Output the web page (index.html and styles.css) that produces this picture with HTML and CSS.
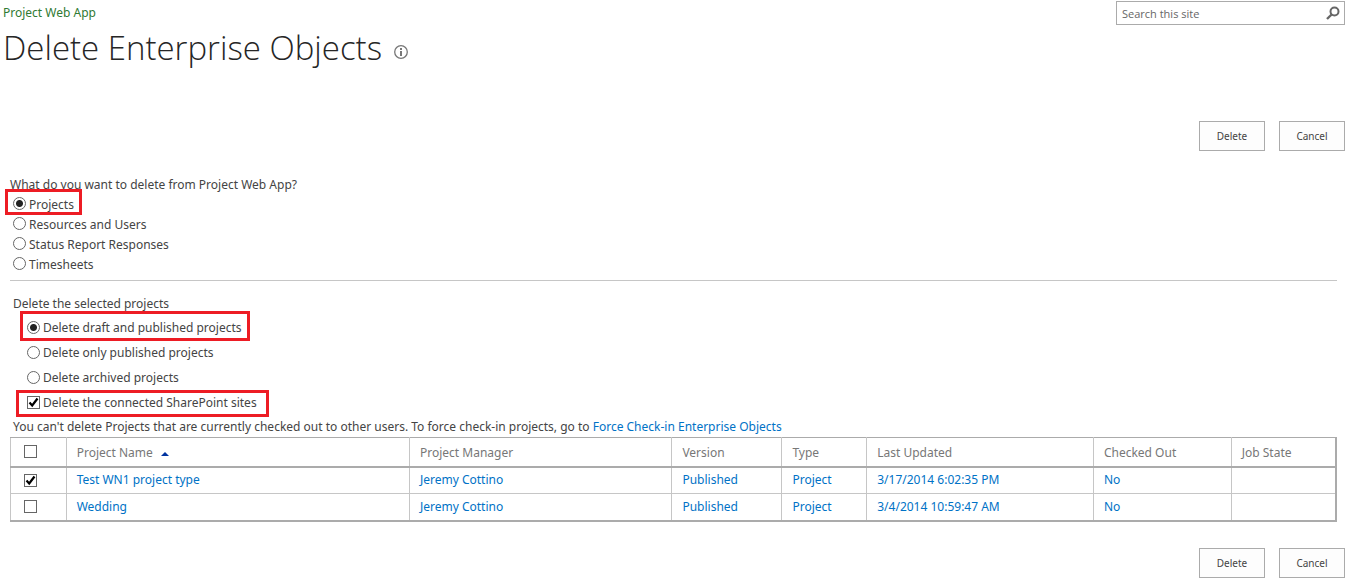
FILE: index.html
```html
<!DOCTYPE html>
<html lang="en">
<head>
    <meta charset="UTF-8">
    <meta name="viewport" content="width=device-width, initial-scale=1.0">
    <title>Delete Enterprise Objects</title>
    <link rel="stylesheet" href="styles.css">
</head>
<body>
    <header class="header">
        <div class="titles">
            <a class="site-link" href="#">Project Web App</a>
            <h1>Delete Enterprise Objects
                <svg class="info-icon" width="14" height="14" viewBox="0 0 14 14">
                    <circle cx="7" cy="7" r="6.3" fill="none" stroke="#777" stroke-width="1.3"/>
                    <path d="M6 3h2v2H6zM6 6h2v5H6z" fill="#777"/>
                </svg>
            </h1>
        </div>
        <form class="search">
            <input type="text" placeholder="Search this site" aria-label="Search this site">
            <button type="button" class="search-button" aria-label="Search">
                <svg width="14" height="14" viewBox="0 0 14 14">
                    <circle cx="8.5" cy="5.5" r="4" fill="none" stroke="#666" stroke-width="2"/>
                    <path d="M5.6 8.5L1 13" fill="none" stroke="#666" stroke-width="2.4"/>
                </svg>
            </button>
        </form>
    </header>

    <div class="buttons">
        <button type="button" class="btn">Delete</button>
        <button type="button" class="btn">Cancel</button>
    </div>

    <main class="content">
        <fieldset class="objects">
            <legend>What do you want to delete from Project Web App?</legend>
            <label class="marked"><input type="radio" name="object" checked>Projects</label>
            <label><input type="radio" name="object">Resources and Users</label>
            <label><input type="radio" name="object">Status Report Responses</label>
            <label><input type="radio" name="object">Timesheets</label>
        </fieldset>

        <fieldset class="options">
            <legend>Delete the selected projects</legend>
            <label class="marked"><input type="radio" name="scope" checked>Delete draft and published projects</label>
            <label><input type="radio" name="scope">Delete only published projects</label>
            <label><input type="radio" name="scope">Delete archived projects</label>
            <label class="marked marked-wide"><input type="checkbox" checked>Delete the connected SharePoint sites</label>
        </fieldset>

        <p class="note">You can't delete Projects that are currently checked out to other users. To force check-in projects, go to <a href="#">Force Check-in Enterprise Objects</a></p>

        <table class="grid">
            <colgroup>
                <col class="col-check">
                <col class="col-name">
                <col class="col-manager">
                <col class="col-version">
                <col class="col-type">
                <col class="col-updated">
                <col class="col-checked">
                <col class="col-job">
            </colgroup>
            <thead>
                <tr>
                    <th class="check"><input type="checkbox" aria-label="Select all projects"></th>
                    <th>Project Name <svg class="sort-icon" width="8" height="4" viewBox="0 0 8 4"><path d="M0 4L4 0l4 4z" fill="#0033a0"/></svg></th>
                    <th>Project Manager</th>
                    <th>Version</th>
                    <th>Type</th>
                    <th>Last Updated</th>
                    <th>Checked Out</th>
                    <th>Job State</th>
                </tr>
            </thead>
            <tbody>
                <tr>
                    <td class="check"><input type="checkbox" aria-label="Select Test WN1 project type" checked></td>
                    <td><a href="#">Test WN1 project type</a></td>
                    <td><a href="#">Jeremy Cottino</a></td>
                    <td>Published</td>
                    <td>Project</td>
                    <td>3/17/2014 6:02:35 PM</td>
                    <td>No</td>
                    <td></td>
                </tr>
                <tr>
                    <td class="check"><input type="checkbox" aria-label="Select Wedding"></td>
                    <td><a href="#">Wedding</a></td>
                    <td><a href="#">Jeremy Cottino</a></td>
                    <td>Published</td>
                    <td>Project</td>
                    <td>3/4/2014 10:59:47 AM</td>
                    <td>No</td>
                    <td></td>
                </tr>
            </tbody>
        </table>
    </main>

    <div class="buttons buttons-bottom">
        <button type="button" class="btn">Delete</button>
        <button type="button" class="btn">Cancel</button>
    </div>
</body>
</html>
```
FILE: styles.css
```css
* {
    margin: 0;
    padding: 0;
    box-sizing: border-box;
}
body {
    background-color: #fff;
    font-family: "Segoe UI", "Noto Sans", sans-serif;
    font-size: 12px;
    line-height: 20px;
    color: #444;
}
a {
    color: #0072c6;
    text-decoration: none;
}
.header {
    display: flex;
    justify-content: space-between;
    align-items: flex-start;
    padding: 1px 5px 0 3px;
    height: 121px;
}
.site-link {
    display: block;
    line-height: 24px;
    color: #2f7a33;
}
h1 {
    display: flex;
    align-items: center;
    gap: 12px;
    font-family: "Segoe UI Light", "Open Sans", sans-serif;
    font-size: 33px;
    font-weight: 300;
    line-height: 46px;
    color: #262626;
}
.info-icon {
    margin-top: 8px;
}
.search {
    display: flex;
    align-items: center;
    width: 229px;
    height: 24px;
    border: 1px solid #ababab;
}
.search input {
    flex: 1;
    min-width: 0;
    padding-left: 5px;
    border: none;
    outline: none;
    font-family: "Segoe UI", "Open Sans", sans-serif;
    font-size: 11px;
    color: #444;
}
.search input::placeholder {
    color: #666;
}
.search-button {
    display: flex;
    padding: 0 4px;
    border: none;
    background: none;
    cursor: pointer;
}
.buttons {
    display: flex;
    justify-content: flex-end;
    gap: 14px;
    padding-right: 5px;
}
.buttons-bottom {
    padding-top: 26px;
}
.btn {
    width: 66px;
    height: 30px;
    border: 1px solid #ababab;
    background-color: #fdfdfd;
    font-family: inherit;
    font-size: 10px;
    color: #444;
    cursor: pointer;
}
.btn:hover {
    background-color: #e6f2fa;
}
.content {
    padding: 24px 13px 0 10px;
}
fieldset {
    border: none;
}
fieldset label {
    display: flex;
    align-items: center;
    gap: 3px;
    width: fit-content;
    height: 20px;
}
.objects {
    padding: 0 3px 5px;
    border-bottom: 1px solid #c6c6c6;
}
.objects legend {
    margin-left: -3px;
}
.objects input {
    margin-bottom: 3px;
}
.options {
    padding: 12px 3px 0;
}
.options legend {
    padding-top: 13px;
    margin-bottom: -11px;
}
.options label {
    height: 25px;
    margin-left: 14px;
}
.note {
    padding: 2px 0 0 3px;
}

/* red frames around the chosen settings */
.marked {
    position: relative;
}
.marked::after {
    content: "";
    position: absolute;
    inset: -6px -8px 0 -8px;
    border: 3px solid #ed1c24;
    pointer-events: none;
}
.options .marked::after {
    inset: -4px -8px -1px -7px;
}
.options .marked-wide::after {
    inset: 0 -12px -2px -11px;
}

input[type="radio"],
input[type="checkbox"] {
    appearance: none;
    flex: none;
    width: 13px;
    height: 13px;
    border: 1px solid #666;
    background-color: #fff;
}
input[type="radio"] {
    border-radius: 50%;
}
input[type="radio"]:checked {
    background-image: radial-gradient(circle, #222 3px, transparent 4px);
}
input[type="checkbox"]:checked {
    background-image: url("data:image/svg+xml,%3Csvg xmlns='http://www.w3.org/2000/svg' viewBox='0 0 11 11'%3E%3Cpath d='M1.5 5.5L4.2 8.5L9.5 1.5' fill='none' stroke='%23000' stroke-width='2.2'/%3E%3C/svg%3E");
}

.grid {
    width: 100%;
    table-layout: fixed;
    border-collapse: collapse;
    border: 1px solid #ababab;
    border-right-width: 2px;
    border-bottom-width: 2px;
}
.grid th,
.grid td {
    height: 27px;
    padding: 0 10px;
    border: 1px solid #c6c6c6;
    text-align: left;
    font-weight: normal;
    white-space: nowrap;
}
.grid th {
    height: 29px;
    padding-top: 3px;
    border-top-color: #ababab;
    border-bottom: 2px solid #ababab;
    color: #777;
}
.grid td {
    color: #0072c6;
}
.grid .check {
    padding-top: 0;
    padding-left: 13px;
}
.check input {
    display: block;
}
.sort-icon {
    margin-left: 5px;
    vertical-align: 1px;
}
.col-check {
    width: 4.2%;
}
.col-name {
    width: 25.9%;
}
.col-manager {
    width: 19.8%;
}
.col-version {
    width: 8.3%;
}
.col-type {
    width: 6.4%;
}
.col-updated {
    width: 17.1%;
}
.col-checked {
    width: 10.4%;
}
```
